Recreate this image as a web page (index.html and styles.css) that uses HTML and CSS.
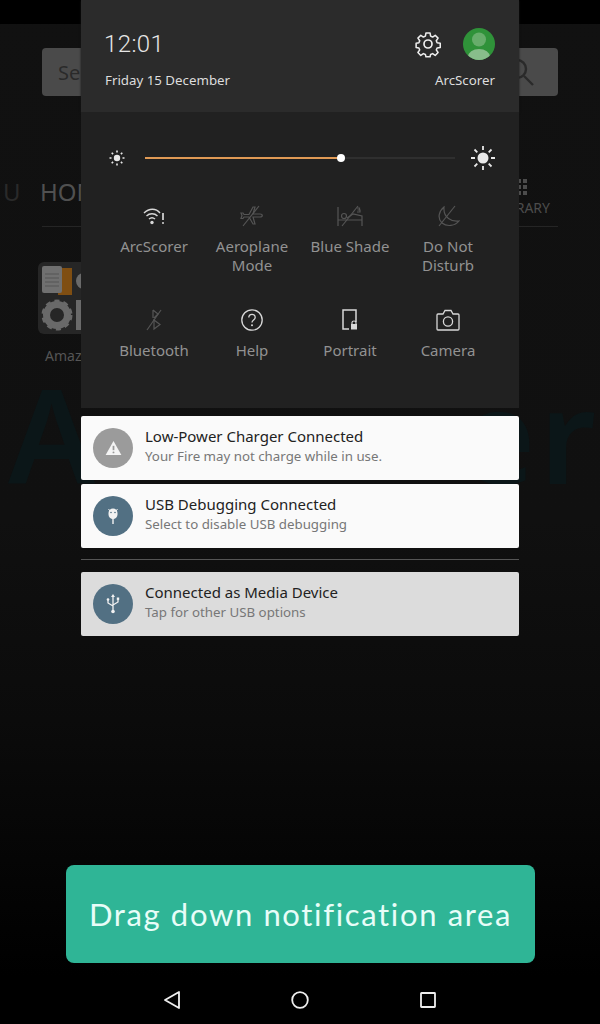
FILE: index.html
```html
<!DOCTYPE html>
<html lang="en">
<head>
  <meta charset="UTF-8">
  <meta name="viewport" content="width=device-width, initial-scale=1.0">
  <title>Drag down notification area</title>
  <link rel="stylesheet" href="styles.css">
</head>
<body>
  <div class="screen">
    <!-- dimmed home screen, only the parts the shade leaves visible -->
    <div class="home">
      <div class="status-bar"></div>
      <div class="search">
        <span class="search-text">Se</span>
        <svg class="search-icon" viewBox="0 0 32 32" width="32" height="32"><circle cx="13" cy="13" r="9" fill="none" stroke="#2a2a2a" stroke-width="2.4"/><path d="M20 20l9 9" stroke="#2a2a2a" stroke-width="2.4"/></svg>
      </div>
      <div class="tabs">
        <span class="tab tab-faint">U</span>
        <span class="tab tab-home">HOM</span>
        <div class="tab-library">
          <svg viewBox="0 0 10 16" width="10" height="16"><g fill="#4c4c4c"><rect width="4" height="4"/><rect x="6" width="4" height="4"/><rect y="6" width="4" height="4"/><rect x="6" y="6" width="4" height="4"/><rect y="12" width="4" height="4"/><rect x="6" y="12" width="4" height="4"/></g></svg>
          <span>RARY</span>
        </div>
      </div>
      <div class="app">
        <div class="app-tile">
          <svg viewBox="0 0 44 72" width="44" height="72">
            <rect x="20" y="6" width="14" height="27" fill="#7f4e12"/>
            <rect x="4" y="4" width="20" height="27" rx="2" fill="#707070"/>
            <path d="M7 12h14M7 16h14M7 20h14M7 24h14" stroke="#555"/>
            <circle cx="46" cy="19" r="8" fill="#6a6a6a"/>
            <circle cx="19" cy="53" r="10.500" fill="none" stroke="#696969" stroke-width="7"/>
            <circle cx="19" cy="53" r="14" fill="none" stroke="#696969" stroke-width="3" stroke-dasharray="5 4"/>
            <rect x="38" y="38" width="6" height="30" fill="#6a6a6a"/>
          </svg>
        </div>
        <span class="app-name">Amaz</span>
      </div>
      <div class="watermark">
        <span>A</span>
        <span class="watermark-end">er</span>
      </div>
    </div>

    <!-- notification shade -->
    <div class="shade">
      <div class="shade-head">
        <div class="head-row">
          <span class="clock">12:01</span>
          <div class="head-icons">
            <svg viewBox="0 0 28 28" width="28" height="28" fill="none" stroke="#eee" stroke-width="1.7" stroke-linejoin="round"><path d="M11.7 1.8h4.6l.6 3.5 2.2 1 2.9-2 3.2 3.2-2 2.9.9 2.2 3.5.6v4.6l-3.5.6-.9 2.2 2 2.9-3.2 3.2-2.9-2-2.2.9-.6 2.6h-4.6l-.6-2.6-2.2-.9-2.9 2-3.2-3.2 2-2.9-.9-2.2-3.1-.6v-4.6l3.1-.6.9-2.2-2-2.9 3.2-3.2 2.9 2 2.2-1z" transform="translate(1.4 1.4) scale(.9)"/><circle cx="14" cy="14" r="4"/></svg>
            <svg class="avatar" viewBox="0 0 32 32" width="32" height="32"><defs><clipPath id="av"><circle cx="16" cy="16" r="16"/></clipPath></defs><circle cx="16" cy="16" r="16" fill="#2f9239"/><g clip-path="url(#av)"><circle cx="16" cy="11.500" r="7" fill="#67ad6b"/><ellipse cx="16" cy="29" rx="11" ry="8" fill="#88bd8b"/></g></svg>
          </div>
        </div>
        <div class="head-row head-labels">
          <span>Friday 15 December</span>
          <span>ArcScorer</span>
        </div>
      </div>

      <div class="quick">
        <div class="brightness">
          <svg viewBox="0 0 16 16" width="16" height="16"><circle cx="8" cy="8" r="3.2" fill="#e8e8e8"/><g stroke="#e8e8e8" stroke-width="1.6"><path d="M8 .5v2M8 13.5v2M.5 8h2M13.5 8h2M2.7 2.7l1.4 1.4M11.9 11.9l1.4 1.4M2.7 13.3l1.4-1.4M11.9 4.1l1.4-1.4"/></g></svg>
          <div class="slider">
            <div class="slider-fill"></div>
            <div class="slider-knob"></div>
          </div>
          <svg viewBox="0 0 24 24" width="24" height="24"><circle cx="12" cy="12" r="5.5" fill="#e8e8e8"/><g stroke="#e8e8e8" stroke-width="1.8"><path d="M12 0v4M12 20v4M0 12h4M20 12h4M3.500 3.500l2.800 2.800M17.700 17.700l2.800 2.800M3.500 20.500l2.800-2.800M17.700 6.300l2.800-2.800"/></g></svg>
        </div>

        <div class="tiles">
          <div class="tile">
            <svg viewBox="0 0 24 22" width="24" height="22" fill="none" stroke="#d8d8d8" stroke-width="1.400"><path d="M2 8c5-5 12-5 16 0M4.500 11c3-3 8-3 11 0M7 14c2-1.800 4-1.800 6 0"/><circle cx="10" cy="17.500" r="1.700" fill="#d8d8d8" stroke="none"/><path d="M21 8v7" stroke-width="1.700"/><circle cx="21" cy="18" r="1" fill="#d8d8d8" stroke="none"/></svg>
            <span>ArcScorer</span>
          </div>
          <div class="tile">
            <svg viewBox="0 0 24 22" width="24" height="22" fill="none" stroke="#555" stroke-width="1.200"><path d="M1 8l2 0 1 1.500h5L13 2h2l-2 7h7c3 0 3 3 0 3h-7l2 7h-2l-4-7H4l-1 1.500H1l1-3z"/><path d="M3 21L19 1"/></svg>
            <span>Aeroplane Mode</span>
          </div>
          <div class="tile">
            <svg viewBox="0 0 26 22" width="26" height="22" fill="none" stroke="#555" stroke-width="1.200"><path d="M1 2v19M1 15h24v6M25 15v-4l-9-2-6 4"/><circle cx="7" cy="11" r="2.500"/><path d="M5 21L21 1"/><path d="M20 3h2.500v2h-2h2.500v2h-3"/></svg>
            <span>Blue Shade</span>
          </div>
          <div class="tile">
            <svg viewBox="0 0 24 22" width="24" height="22" fill="none" stroke="#555" stroke-width="1.200"><path d="M8 2C3 6 1 13 6 18c5 4 13 3 17-2-7 1-16-3-15-14z"/><path d="M3 21L19 1"/></svg>
            <span>Do Not Disturb</span>
          </div>
          <div class="tile">
            <svg viewBox="0 0 24 22" width="24" height="22" fill="none" stroke="#555" stroke-width="1.200"><path d="M11 1v8M11 1l5 4-4 4"/><path d="M12 11v9l6-4.500z"/><path d="M5 21L19 1"/></svg>
            <span>Bluetooth</span>
          </div>
          <div class="tile">
            <svg viewBox="0 0 24 22" width="24" height="22" fill="none" stroke="#d8d8d8" stroke-width="1.300"><circle cx="12" cy="11" r="10.200"/><path d="M8.800 8.600c0-4.300 6.400-4.300 6.400-.2 0 2.400-3.200 2.600-3.200 5"/><circle cx="12" cy="16.200" r="1" fill="#d8d8d8" stroke="none"/></svg>
            <span>Help</span>
          </div>
          <div class="tile">
            <svg viewBox="0 0 24 22" width="24" height="22" fill="none" stroke="#d8d8d8" stroke-width="1.500"><path d="M11 20H5V1h13v12"/><rect x="13" y="15" width="6" height="5.500" fill="#d8d8d8" stroke="none"/><path d="M14 15v-1.500c0-2 4-2 4 0V15" stroke-width="1.200"/></svg>
            <span>Portrait</span>
          </div>
          <div class="tile">
            <svg viewBox="0 0 24 22" width="24" height="22" fill="none" stroke="#d8d8d8" stroke-width="1.300"><path d="M2 5h5l2-3.500h6L17 5h5a1 1 0 0 1 1 1v14a1 1 0 0 1-1 1H2a1 1 0 0 1-1-1V6a1 1 0 0 1 1-1z"/><circle cx="12" cy="12.500" r="4.600"/></svg>
            <span>Camera</span>
          </div>
        </div>
      </div>

      <div class="notes">
        <div class="note">
          <div class="note-icon note-icon-warn">
            <svg viewBox="0 0 18 16" width="17" height="14"><path d="M9 0l9 16H0z" fill="#f4f4f4"/><path d="M9 5.500v5" stroke="#999" stroke-width="2"/><circle cx="9" cy="13" r="1.100" fill="#999"/></svg>
          </div>
          <div class="note-text">
            <span class="note-title">Low-Power Charger Connected</span>
            <span class="note-sub">Your Fire may not charge while in use.</span>
          </div>
        </div>
        <div class="note">
          <div class="note-icon">
            <svg viewBox="0 0 12 18" width="12" height="18" fill="#f2f2f2"><path d="M1.500 6a4.500 4.500 0 0 1 9 0v1.500a4.500 4.500 0 0 1-9 0z"/><path d="M1.500 2l1.500 2M10.500 2L9 4" stroke="#f2f2f2"/><circle cx="4" cy="5.500" r=".8" fill="#527083"/><circle cx="8" cy="5.500" r=".8" fill="#527083"/><rect x="5.300" y="11" width="1.400" height="6"/></svg>
          </div>
          <div class="note-text">
            <span class="note-title">USB Debugging Connected</span>
            <span class="note-sub">Select to disable USB debugging</span>
          </div>
        </div>
        <div class="note-divider"></div>
        <div class="note note-grey">
          <div class="note-icon">
            <svg viewBox="0 0 14 20" width="14" height="20" fill="none" stroke="#f2f2f2" stroke-width="1.300"><path d="M7 2v15M2 6v3l5 3M12 5v3l-5 3"/><path d="M7 0l2 3H5z" fill="#f2f2f2" stroke="none"/><circle cx="2" cy="5.500" r="1.300" fill="#f2f2f2" stroke="none"/><rect x="10.800" y="3.500" width="2.400" height="2.400" fill="#f2f2f2" stroke="none"/><circle cx="7" cy="17.500" r="1.800" fill="#f2f2f2" stroke="none"/></svg>
          </div>
          <div class="note-text">
            <span class="note-title">Connected as Media Device</span>
            <span class="note-sub">Tap for other USB options</span>
          </div>
        </div>
      </div>
    </div>

    <div class="hint">Drag down notification area</div>

    <div class="nav-bar">
      <svg viewBox="0 0 18 18" width="18" height="18" fill="none" stroke="#eee" stroke-width="1.800" stroke-linejoin="round"><path d="M16 1v16L2 9z"/></svg>
      <svg viewBox="0 0 18 18" width="18" height="18" fill="none" stroke="#eee" stroke-width="1.800"><circle cx="9" cy="9" r="7.800"/></svg>
      <svg viewBox="0 0 18 18" width="18" height="18" fill="none" stroke="#eee" stroke-width="1.800"><rect x="2" y="2" width="14" height="14" rx=".5"/></svg>
    </div>
  </div>
</body>
</html>
```

FILE: styles.css
```css
* {
  box-sizing: border-box;
}
html,
body {
  margin: 0;
  background: #000;
}
.screen {
  position: relative;
  width: 600px;
  height: 1024px;
  overflow: hidden;
  background: #000;
  font-family: "Noto Sans", sans-serif;
  display: flex;
  flex-direction: column;
}

/* home screen, dimmed */
.home {
  flex: 1;
  min-height: 0;
  background: linear-gradient(#111 0, #101010 520px, #0b0b0b 720px, #000 976px);
}
.status-bar {
  height: 24px;
  background: #000;
}
.search {
  margin: 24px 42px 0;
  height: 48px;
  padding: 0 22px 0 16px;
  display: flex;
  align-items: center;
  justify-content: space-between;
  background: #4a4a4a;
  border-radius: 4px;
}
.search-text {
  font-size: 20px;
  color: #2a2a2a;
}
.tabs {
  margin: 82px 42px 0;
  height: 49px;
  display: flex;
  border-bottom: 1px solid #252525;
}
.tab {
  margin-top: -2px;
  font-size: 24px;
  line-height: 32px;
  color: #505050;
}
.tab-faint {
  width: 37px;
  margin-left: -39px;
  color: #2a2a2a;
}
.tab-home {
  width: 41px;
  overflow: hidden;
}
.tab-library {
  margin: 1px 8px 0 auto;
  display: flex;
  flex-direction: column;
  align-items: flex-start;
  gap: 3px;
  font-size: 14px;
  line-height: 19px;
  color: #4c4c4c;
}
.tab-library svg {
  margin-left: 1px;
}
.app {
  margin: 35px 0 0 38px;
  width: 43px;
  display: flex;
  flex-direction: column;
  gap: 12px;
}
.app-tile {
  width: 43px;
  height: 72px;
  overflow: hidden;
  background: #262626;
  border-radius: 6px 0 0 6px;
}
.app-name {
  font-size: 14px;
  line-height: 19px;
  color: #555;
  margin-left: 7px;
}
.watermark {
  margin: 14px 0 0 8px;
  display: flex;
  justify-content: space-between;
  font-size: 130px;
  font-weight: 600;
  line-height: 110px;
  color: #0b1618;
}
.watermark-end {
  letter-spacing: 4px;
}

/* pulled down shade */
.shade {
  position: absolute;
  left: 81px;
  top: 0;
  width: 438px;
  color: #eee;
}
.shade-head {
  height: 112px;
  padding: 28px 24px 0;
  background: #2b2b2b;
  box-shadow: 0 1px 2px #181818;
}
.head-row {
  display: flex;
  justify-content: space-between;
  align-items: center;
}
.clock {
  margin-left: -1px;
  font-size: 24px;
  font-weight: 300;
  font-family: Roboto, sans-serif;
  letter-spacing: .4px;
  color: #e6e6e6;
}
.head-icons {
  display: flex;
  align-items: center;
  gap: 21px;
}
.head-labels {
  margin-top: 11px;
  font-size: 13.300px;
  color: #ddd;
}
.quick {
  height: 296px;
  padding: 34px 24px 0;
  background: #212121;
}
.brightness {
  height: 24px;
  padding-left: 4px;
  display: flex;
  align-items: center;
  gap: 20px;
}
.slider {
  position: relative;
  flex: 1;
  height: 2px;
  margin-right: -4px;
  background: #2f2f2f;
}
.slider-fill {
  width: 63.200%;
  height: 2px;
  background: #e09a55;
}
.slider-knob {
  position: absolute;
  left: calc(63.200% - 4px);
  top: -3px;
  width: 8px;
  height: 8px;
  border-radius: 50%;
  background: #fff;
}
.tiles {
  margin-top: 35px;
  display: grid;
  grid-template-columns: repeat(4, 98px);
  grid-template-rows: 104px 60px;
}
.tile {
  display: flex;
  flex-direction: column;
  align-items: center;
  gap: 10px;
  text-align: center;
  font-size: 15px;
  line-height: 19px;
  color: #929292;
}
.tile span {
  width: 84px;
}
.notes {
  padding-top: 8px;
  display: flex;
  flex-direction: column;
  gap: 4px;
}
.note {
  height: 64px;
  padding: 0 12px;
  display: flex;
  align-items: center;
  gap: 12px;
  background: #fafafa;
  border-radius: 2px;
}
.note-grey {
  background: #dcdcdc;
}
.note-divider {
  height: 1px;
  margin: 7px 0 8px;
  background: #555;
}
.note-icon {
  width: 40px;
  height: 40px;
  flex: none;
  display: flex;
  align-items: center;
  justify-content: center;
  border-radius: 50%;
  background: #527083;
}
.note-icon-warn {
  background: #9b9b9b;
}
.note-text {
  padding-bottom: 4px;
  display: flex;
  flex-direction: column;
}
.note-title {
  font-size: 15px;
  line-height: 20px;
  color: #222;
}
.note-sub {
  font-size: 13.300px;
  line-height: 20px;
  color: #777;
}

/* tutorial hint over the page */
.hint {
  position: absolute;
  left: 66px;
  top: 865px;
  width: 469px;
  height: 98px;
  display: flex;
  align-items: center;
  justify-content: center;
  background: #2fb596;
  border-radius: 8px;
  font-family: Lato, sans-serif;
  font-size: 31px;
  letter-spacing: 1.650px;
  color: #e8fdf8;
}
.nav-bar {
  height: 48px;
  flex: none;
  padding: 0 163px;
  display: flex;
  align-items: center;
  justify-content: space-between;
  background: #000;
}
```
